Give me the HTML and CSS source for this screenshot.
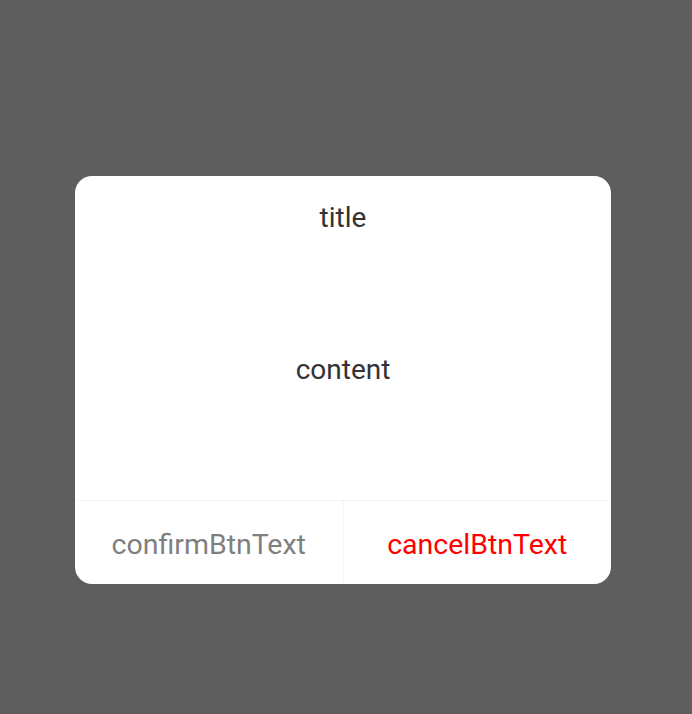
FILE: index.html
```html
<!DOCTYPE html>
<html>
<head>
<meta charset="utf-8">
<link rel="stylesheet" href="styles.css">
</head>
<body>
<div class="overlay">
  <div class="dialog">
    <div class="title">title</div>
    <div class="content">content</div>
    <div class="footer">
      <div class="btn confirm">confirmBtnText</div>
      <div class="btn cancel">cancelBtnText</div>
    </div>
  </div>
</div>
</body>
</html>
```
FILE: styles.css
```css
html, body {
  margin: 0;
  padding: 0;
  height: 100%;
}
body {
  background: #5e5e5e;
  font-family: Roboto, "Noto Sans", sans-serif;
}
.overlay {
  height: 714px;
  display: flex;
  flex-direction: column;
  align-items: flex-start;
  padding-top: 176px;
  padding-left: 75px;
  box-sizing: border-box;
}
.dialog {
  width: 536px;
  height: 408px;
  background: #fff;
  border-radius: 17px;
  display: flex;
  flex-direction: column;
  overflow: hidden;
}
.title {
  margin-top: 22px;
  height: 40px;
  line-height: 40px;
  text-align: center;
  font-size: 28px;
  color: #333;
}
.content {
  flex: 1;
  display: flex;
  align-items: center;
  justify-content: center;
  font-size: 28px;
  color: #333;
  padding-top: 0;
}
.footer {
  height: 83px;
  border-top: 1px solid #f4f4f4;
  display: flex;
}
.btn {
  flex: 1;
  display: flex;
  align-items: center;
  justify-content: center;
  font-size: 28.5px;
  padding-top: 4px;
}
.confirm {
  color: #7f7f7f;
  border-right: 1px solid #f4f4f4;
}
.cancel {
  color: #ff0000;
}
```
